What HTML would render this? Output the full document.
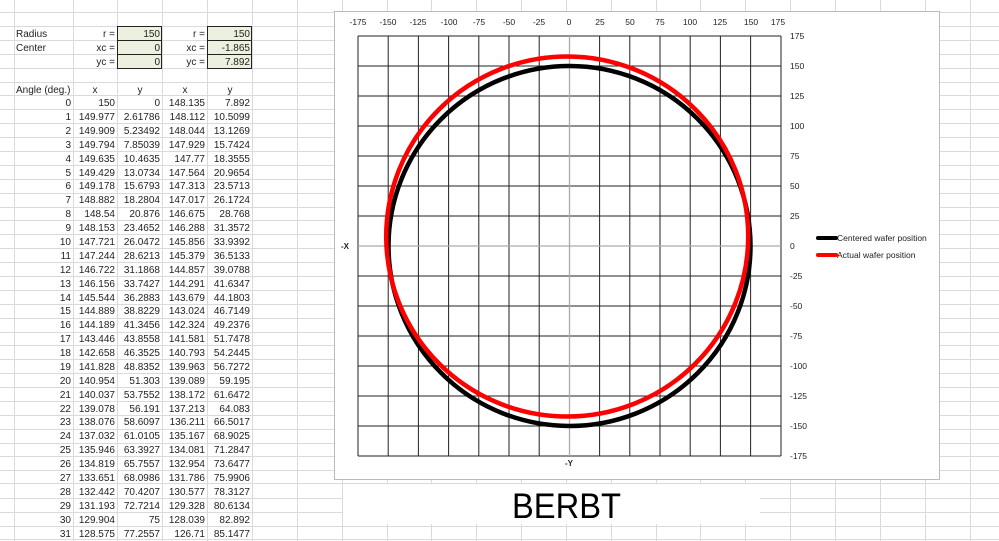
<!DOCTYPE html>
<html><head><meta charset="utf-8"><style>html,body{margin:0;padding:0;background:#fff}svg{display:block}</style></head>
<body>
<svg width="999" height="541" xmlns="http://www.w3.org/2000/svg" font-family="Liberation Sans, sans-serif">
<rect width="999" height="541" fill="#fff"/>
<g stroke="#dadada" stroke-width="1">
<line x1="14.5" y1="0" x2="14.5" y2="541"/><line x1="73.5" y1="0" x2="73.5" y2="541"/><line x1="117.5" y1="0" x2="117.5" y2="541"/><line x1="162.5" y1="0" x2="162.5" y2="541"/><line x1="207.5" y1="0" x2="207.5" y2="541"/><line x1="252.5" y1="0" x2="252.5" y2="541"/><line x1="297.5" y1="0" x2="297.5" y2="541"/><line x1="342.5" y1="0" x2="342.5" y2="541"/><line x1="387.5" y1="0" x2="387.5" y2="541"/><line x1="431.5" y1="0" x2="431.5" y2="541"/><line x1="476.5" y1="0" x2="476.5" y2="541"/><line x1="521.5" y1="0" x2="521.5" y2="541"/><line x1="566.5" y1="0" x2="566.5" y2="541"/><line x1="611.5" y1="0" x2="611.5" y2="541"/><line x1="656.5" y1="0" x2="656.5" y2="541"/><line x1="700.5" y1="0" x2="700.5" y2="541"/><line x1="745.5" y1="0" x2="745.5" y2="541"/><line x1="790.5" y1="0" x2="790.5" y2="541"/><line x1="835.5" y1="0" x2="835.5" y2="541"/><line x1="880.5" y1="0" x2="880.5" y2="541"/><line x1="925.5" y1="0" x2="925.5" y2="541"/><line x1="970.5" y1="0" x2="970.5" y2="541"/>
<line x1="0" y1="12.5" x2="999" y2="12.5"/><line x1="0" y1="26.5" x2="999" y2="26.5"/><line x1="0" y1="40.5" x2="999" y2="40.5"/><line x1="0" y1="54.5" x2="999" y2="54.5"/><line x1="0" y1="68.5" x2="999" y2="68.5"/><line x1="0" y1="82.5" x2="999" y2="82.5"/><line x1="0" y1="95.5" x2="999" y2="95.5"/><line x1="0" y1="109.5" x2="999" y2="109.5"/><line x1="0" y1="123.5" x2="999" y2="123.5"/><line x1="0" y1="137.5" x2="999" y2="137.5"/><line x1="0" y1="151.5" x2="999" y2="151.5"/><line x1="0" y1="165.5" x2="999" y2="165.5"/><line x1="0" y1="179.5" x2="999" y2="179.5"/><line x1="0" y1="193.5" x2="999" y2="193.5"/><line x1="0" y1="207.5" x2="999" y2="207.5"/><line x1="0" y1="220.5" x2="999" y2="220.5"/><line x1="0" y1="234.5" x2="999" y2="234.5"/><line x1="0" y1="248.5" x2="999" y2="248.5"/><line x1="0" y1="262.5" x2="999" y2="262.5"/><line x1="0" y1="276.5" x2="999" y2="276.5"/><line x1="0" y1="290.5" x2="999" y2="290.5"/><line x1="0" y1="304.5" x2="999" y2="304.5"/><line x1="0" y1="318.5" x2="999" y2="318.5"/><line x1="0" y1="332.5" x2="999" y2="332.5"/><line x1="0" y1="345.5" x2="999" y2="345.5"/><line x1="0" y1="359.5" x2="999" y2="359.5"/><line x1="0" y1="373.5" x2="999" y2="373.5"/><line x1="0" y1="387.5" x2="999" y2="387.5"/><line x1="0" y1="401.5" x2="999" y2="401.5"/><line x1="0" y1="415.5" x2="999" y2="415.5"/><line x1="0" y1="429.5" x2="999" y2="429.5"/><line x1="0" y1="443.5" x2="999" y2="443.5"/><line x1="0" y1="456.5" x2="999" y2="456.5"/><line x1="0" y1="470.5" x2="999" y2="470.5"/><line x1="0" y1="483.5" x2="999" y2="483.5"/><line x1="0" y1="498.5" x2="999" y2="498.5"/><line x1="0" y1="512.5" x2="999" y2="512.5"/><line x1="0" y1="526.5" x2="999" y2="526.5"/><line x1="0" y1="539.5" x2="999" y2="539.5"/>
</g>
<!-- input cells -->
<g fill="#ebf1de" stroke="#222" stroke-width="1">
<rect x="117.5" y="26.5" width="44" height="14"/><rect x="117.5" y="40.5" width="44" height="14"/><rect x="117.5" y="54.5" width="44" height="14"/>
<rect x="207.5" y="26.5" width="44" height="14"/><rect x="207.5" y="40.5" width="44" height="14"/><rect x="207.5" y="54.5" width="44" height="14"/>
</g>
<g font-size="10" fill="#222">
<text x="16" y="37">Radius</text><text x="16" y="51">Center</text><text x="16" y="93">Angle (deg.)</text>
<g text-anchor="end">
<text x="115" y="37">r =</text><text x="115" y="51">xc =</text><text x="115" y="65">yc =</text>
<text x="160" y="37">150</text><text x="160" y="51">0</text><text x="160" y="65">0</text>
<text x="205" y="37">r =</text><text x="205" y="51">xc =</text><text x="205" y="65">yc =</text>
<text x="250" y="37">150</text><text x="250" y="51">-1.865</text><text x="250" y="65">7.892</text>
</g>
<g text-anchor="middle"><text x="95" y="93">x</text><text x="140" y="93">y</text><text x="185" y="93">x</text><text x="230" y="93">y</text></g>
<g text-anchor="end">
<text y="106"><tspan x="71">0</tspan><tspan x="115">150</tspan><tspan x="160">0</tspan><tspan x="205">148.135</tspan><tspan x="250">7.892</tspan></text>
<text y="120"><tspan x="71">1</tspan><tspan x="115">149.977</tspan><tspan x="160">2.61786</tspan><tspan x="205">148.112</tspan><tspan x="250">10.5099</tspan></text>
<text y="134"><tspan x="71">2</tspan><tspan x="115">149.909</tspan><tspan x="160">5.23492</tspan><tspan x="205">148.044</tspan><tspan x="250">13.1269</tspan></text>
<text y="148"><tspan x="71">3</tspan><tspan x="115">149.794</tspan><tspan x="160">7.85039</tspan><tspan x="205">147.929</tspan><tspan x="250">15.7424</tspan></text>
<text y="162"><tspan x="71">4</tspan><tspan x="115">149.635</tspan><tspan x="160">10.4635</tspan><tspan x="205">147.77</tspan><tspan x="250">18.3555</tspan></text>
<text y="176"><tspan x="71">5</tspan><tspan x="115">149.429</tspan><tspan x="160">13.0734</tspan><tspan x="205">147.564</tspan><tspan x="250">20.9654</tspan></text>
<text y="189"><tspan x="71">6</tspan><tspan x="115">149.178</tspan><tspan x="160">15.6793</tspan><tspan x="205">147.313</tspan><tspan x="250">23.5713</tspan></text>
<text y="203"><tspan x="71">7</tspan><tspan x="115">148.882</tspan><tspan x="160">18.2804</tspan><tspan x="205">147.017</tspan><tspan x="250">26.1724</tspan></text>
<text y="217"><tspan x="71">8</tspan><tspan x="115">148.54</tspan><tspan x="160">20.876</tspan><tspan x="205">146.675</tspan><tspan x="250">28.768</tspan></text>
<text y="231"><tspan x="71">9</tspan><tspan x="115">148.153</tspan><tspan x="160">23.4652</tspan><tspan x="205">146.288</tspan><tspan x="250">31.3572</tspan></text>
<text y="245"><tspan x="71">10</tspan><tspan x="115">147.721</tspan><tspan x="160">26.0472</tspan><tspan x="205">145.856</tspan><tspan x="250">33.9392</tspan></text>
<text y="259"><tspan x="71">11</tspan><tspan x="115">147.244</tspan><tspan x="160">28.6213</tspan><tspan x="205">145.379</tspan><tspan x="250">36.5133</tspan></text>
<text y="273"><tspan x="71">12</tspan><tspan x="115">146.722</tspan><tspan x="160">31.1868</tspan><tspan x="205">144.857</tspan><tspan x="250">39.0788</tspan></text>
<text y="287"><tspan x="71">13</tspan><tspan x="115">146.156</tspan><tspan x="160">33.7427</tspan><tspan x="205">144.291</tspan><tspan x="250">41.6347</tspan></text>
<text y="301"><tspan x="71">14</tspan><tspan x="115">145.544</tspan><tspan x="160">36.2883</tspan><tspan x="205">143.679</tspan><tspan x="250">44.1803</tspan></text>
<text y="314"><tspan x="71">15</tspan><tspan x="115">144.889</tspan><tspan x="160">38.8229</tspan><tspan x="205">143.024</tspan><tspan x="250">46.7149</tspan></text>
<text y="328"><tspan x="71">16</tspan><tspan x="115">144.189</tspan><tspan x="160">41.3456</tspan><tspan x="205">142.324</tspan><tspan x="250">49.2376</tspan></text>
<text y="342"><tspan x="71">17</tspan><tspan x="115">143.446</tspan><tspan x="160">43.8558</tspan><tspan x="205">141.581</tspan><tspan x="250">51.7478</tspan></text>
<text y="356"><tspan x="71">18</tspan><tspan x="115">142.658</tspan><tspan x="160">46.3525</tspan><tspan x="205">140.793</tspan><tspan x="250">54.2445</tspan></text>
<text y="370"><tspan x="71">19</tspan><tspan x="115">141.828</tspan><tspan x="160">48.8352</tspan><tspan x="205">139.963</tspan><tspan x="250">56.7272</tspan></text>
<text y="384"><tspan x="71">20</tspan><tspan x="115">140.954</tspan><tspan x="160">51.303</tspan><tspan x="205">139.089</tspan><tspan x="250">59.195</tspan></text>
<text y="398"><tspan x="71">21</tspan><tspan x="115">140.037</tspan><tspan x="160">53.7552</tspan><tspan x="205">138.172</tspan><tspan x="250">61.6472</tspan></text>
<text y="412"><tspan x="71">22</tspan><tspan x="115">139.078</tspan><tspan x="160">56.191</tspan><tspan x="205">137.213</tspan><tspan x="250">64.083</tspan></text>
<text y="425"><tspan x="71">23</tspan><tspan x="115">138.076</tspan><tspan x="160">58.6097</tspan><tspan x="205">136.211</tspan><tspan x="250">66.5017</tspan></text>
<text y="439"><tspan x="71">24</tspan><tspan x="115">137.032</tspan><tspan x="160">61.0105</tspan><tspan x="205">135.167</tspan><tspan x="250">68.9025</tspan></text>
<text y="453"><tspan x="71">25</tspan><tspan x="115">135.946</tspan><tspan x="160">63.3927</tspan><tspan x="205">134.081</tspan><tspan x="250">71.2847</tspan></text>
<text y="467"><tspan x="71">26</tspan><tspan x="115">134.819</tspan><tspan x="160">65.7557</tspan><tspan x="205">132.954</tspan><tspan x="250">73.6477</tspan></text>
<text y="481"><tspan x="71">27</tspan><tspan x="115">133.651</tspan><tspan x="160">68.0986</tspan><tspan x="205">131.786</tspan><tspan x="250">75.9906</tspan></text>
<text y="495"><tspan x="71">28</tspan><tspan x="115">132.442</tspan><tspan x="160">70.4207</tspan><tspan x="205">130.577</tspan><tspan x="250">78.3127</tspan></text>
<text y="509"><tspan x="71">29</tspan><tspan x="115">131.193</tspan><tspan x="160">72.7214</tspan><tspan x="205">129.328</tspan><tspan x="250">80.6134</tspan></text>
<text y="523"><tspan x="71">30</tspan><tspan x="115">129.904</tspan><tspan x="160">75</tspan><tspan x="205">128.039</tspan><tspan x="250">82.892</tspan></text>
<text y="537"><tspan x="71">31</tspan><tspan x="115">128.575</tspan><tspan x="160">77.2557</tspan><tspan x="205">126.71</tspan><tspan x="250">85.1477</tspan></text>
</g></g>
<!-- chart -->
<rect x="334.5" y="11.5" width="605" height="468" fill="#fff" stroke="#bbb"/>
<g stroke="#222" stroke-width="1">
<line x1="358" y1="36" x2="781" y2="36"/><line x1="358" y1="66" x2="781" y2="66"/><line x1="358" y1="96" x2="781" y2="96"/><line x1="358" y1="126" x2="781" y2="126"/><line x1="358" y1="156" x2="781" y2="156"/><line x1="358" y1="186" x2="781" y2="186"/><line x1="358" y1="216" x2="781" y2="216"/><line x1="358" y1="276" x2="781" y2="276"/><line x1="358" y1="306" x2="781" y2="306"/><line x1="358" y1="336" x2="781" y2="336"/><line x1="358" y1="366" x2="781" y2="366"/><line x1="358" y1="396" x2="781" y2="396"/><line x1="358" y1="426" x2="781" y2="426"/><line x1="358" y1="456" x2="781" y2="456"/>
<line x1="358" y1="36" x2="358" y2="456"/><line x1="388.2" y1="36" x2="388.2" y2="456"/><line x1="418.4" y1="36" x2="418.4" y2="456"/><line x1="448.6" y1="36" x2="448.6" y2="456"/><line x1="478.8" y1="36" x2="478.8" y2="456"/><line x1="509" y1="36" x2="509" y2="456"/><line x1="539.2" y1="36" x2="539.2" y2="456"/><line x1="599.6" y1="36" x2="599.6" y2="456"/><line x1="629.8" y1="36" x2="629.8" y2="456"/><line x1="660" y1="36" x2="660" y2="456"/><line x1="690.2" y1="36" x2="690.2" y2="456"/><line x1="720.4" y1="36" x2="720.4" y2="456"/><line x1="750.6" y1="36" x2="750.6" y2="456"/><line x1="781" y1="36" x2="781" y2="456"/>
</g>
<g stroke="#aaa" stroke-width="1.3"><line x1="569.5" y1="36" x2="569.5" y2="456"/><line x1="358" y1="246" x2="781" y2="246"/></g>
<ellipse cx="569.5" cy="246" rx="181" ry="180" fill="none" stroke="#000" stroke-width="4.5"/>
<ellipse cx="567.2" cy="236.5" rx="181" ry="180" fill="none" stroke="#f00" stroke-width="4.5"/>
<g font-size="8.5" fill="#222" text-anchor="middle">
<text x="358" y="25">-175</text><text x="388" y="25">-150</text><text x="418" y="25">-125</text><text x="449" y="25">-100</text><text x="479" y="25">-75</text><text x="509" y="25">-50</text><text x="539" y="25">-25</text><text x="569" y="25">0</text><text x="600" y="25">25</text><text x="630" y="25">50</text><text x="660" y="25">75</text><text x="690" y="25">100</text><text x="720" y="25">125</text><text x="751" y="25">150</text><text x="778" y="25">175</text>
</g>
<g font-size="8.5" fill="#222">
<text x="790" y="39">175</text><text x="790" y="69">150</text><text x="790" y="99">125</text><text x="790" y="129">100</text><text x="790" y="159">75</text><text x="790" y="189">50</text><text x="790" y="219">25</text><text x="790" y="249">0</text><text x="790" y="279">-25</text><text x="790" y="309">-50</text><text x="790" y="339">-75</text><text x="790" y="369">-100</text><text x="790" y="399">-125</text><text x="790" y="429">-150</text><text x="790" y="459">-175</text>
<text x="341" y="249" font-weight="bold" font-size="8">-X</text>
<text x="565" y="466" font-weight="bold" font-size="8">-Y</text>
<text x="837" y="241">Centered wafer position</text>
<text x="837" y="258">Actual wafer position</text>
</g>
<line x1="818" y1="238" x2="836" y2="238" stroke="#000" stroke-width="4" stroke-linecap="round"/>
<line x1="818" y1="255" x2="836" y2="255" stroke="#f00" stroke-width="4" stroke-linecap="round"/>
<rect x="343" y="484" width="417" height="40" fill="#fff"/>
<text x="512" y="518" font-size="35" fill="#000" textLength="109" lengthAdjust="spacingAndGlyphs">BERBT</text>
</svg>
</body></html>
